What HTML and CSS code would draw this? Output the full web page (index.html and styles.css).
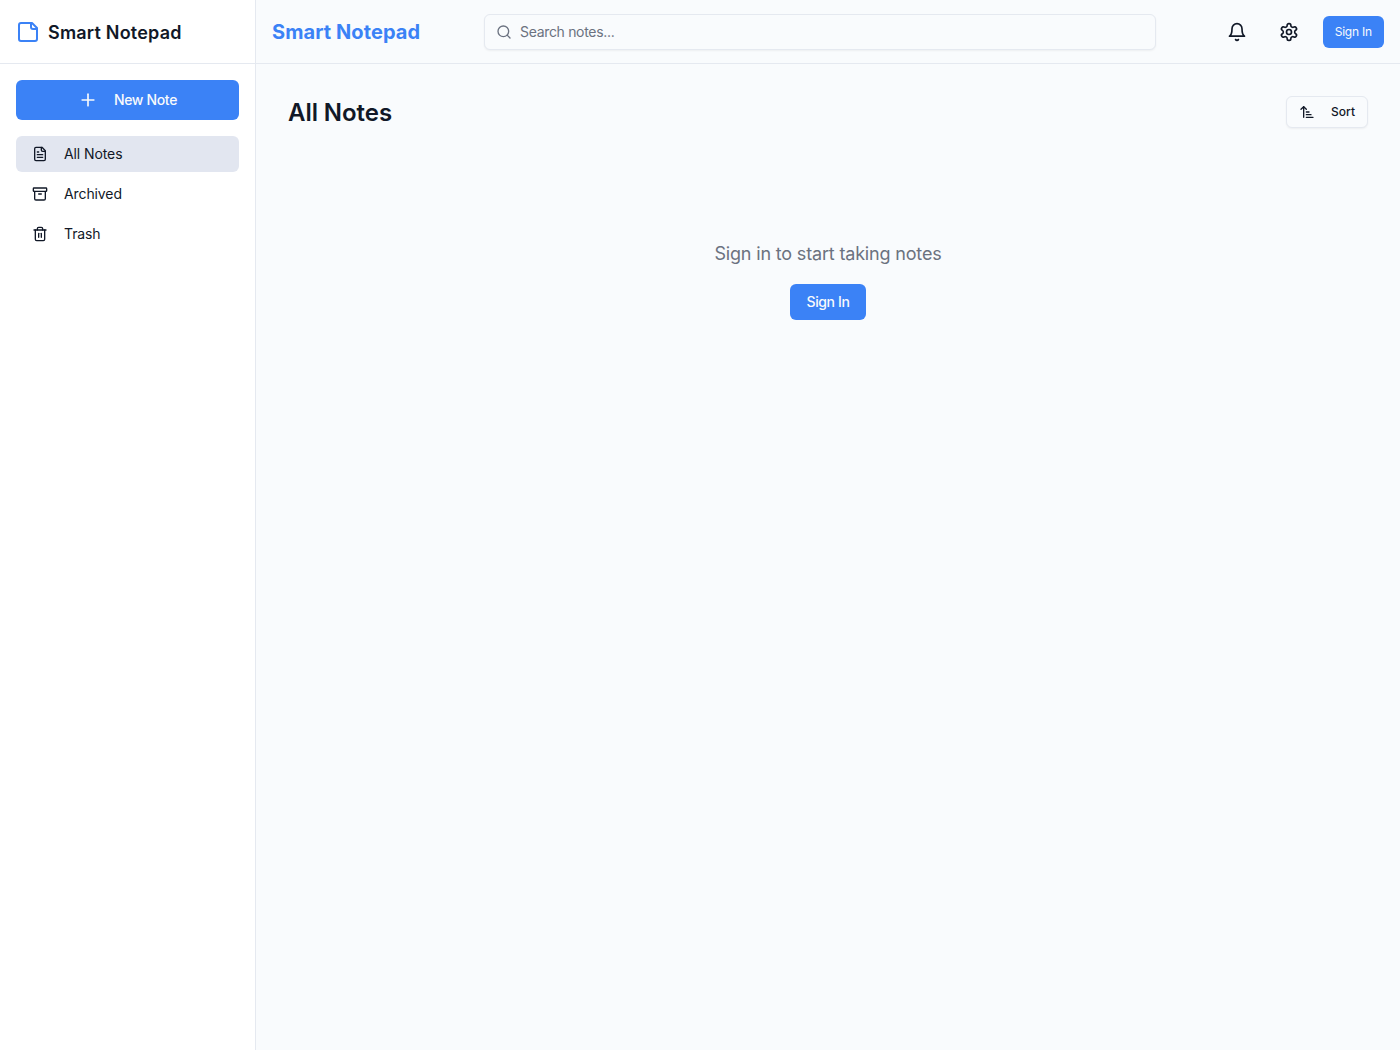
FILE: index.html
```html
<!DOCTYPE html>
<html lang="en">
<head>
<meta charset="utf-8">
<title>Smart Notepad</title>
<link rel="stylesheet" href="styles.css">
</head>
<body>
<div class="app">
  <aside class="sidebar">
    <div class="brand">
      <svg class="icon icon-24 icon-blue" viewBox="0 0 24 24"><path d="M16 3H5a2 2 0 0 0-2 2v14a2 2 0 0 0 2 2h14a2 2 0 0 0 2-2V8Z"/><path d="M15 3v4a2 2 0 0 0 2 2h4"/></svg>
      <span class="brand-name">Smart Notepad</span>
    </div>
    <div class="side-body">
      <button class="btn new-note">
        <svg class="icon icon-20" viewBox="0 0 24 24"><path d="M5 12h14"/><path d="M12 5v14"/></svg>
        <span class="label">New Note</span>
      </button>
      <nav class="nav">
        <a class="nav-item active">
          <svg class="icon icon-16" viewBox="0 0 24 24"><path d="M15 2H6a2 2 0 0 0-2 2v16a2 2 0 0 0 2 2h12a2 2 0 0 0 2-2V7Z"/><path d="M14 2v4a2 2 0 0 0 2 2h4"/><path d="M10 9H8"/><path d="M16 13H8"/><path d="M16 17H8"/></svg>
          <span class="label">All Notes</span>
        </a>
        <a class="nav-item">
          <svg class="icon icon-16" viewBox="0 0 24 24"><rect width="20" height="5" x="2" y="3" rx="1"/><path d="M4 8v11a2 2 0 0 0 2 2h12a2 2 0 0 0 2-2V8"/><path d="M10 12h4"/></svg>
          <span class="label">Archived</span>
        </a>
        <a class="nav-item">
          <svg class="icon icon-16" viewBox="0 0 24 24"><path d="M3 6h18"/><path d="M19 6v14c0 1-1 2-2 2H7c-1 0-2-1-2-2V6"/><path d="M8 6V4c0-1 1-2 2-2h4c1 0 2 1 2 2v2"/><path d="M10 11v6"/><path d="M14 11v6"/></svg>
          <span class="label">Trash</span>
        </a>
      </nav>
    </div>
  </aside>
  <div class="content">
    <header class="topbar">
      <div class="top-title">Smart Notepad</div>
      <label class="search">
        <svg class="icon icon-16 icon-muted" viewBox="0 0 24 24"><circle cx="11" cy="11" r="8"/><path d="m21 21-4.3-4.3"/></svg>
        <input class="search-input" type="text" placeholder="Search notes...">
      </label>
      <div class="top-actions">
        <button class="icon-btn"><svg class="icon icon-20" viewBox="0 0 24 24"><path d="M6 8a6 6 0 0 1 12 0c0 7 3 9 3 9H3s3-2 3-9"/><path d="M10.3 21a1.94 1.94 0 0 0 3.4 0"/></svg></button>
        <button class="icon-btn"><svg class="icon icon-20" viewBox="0 0 24 24"><path d="M12.22 2h-.44a2 2 0 0 0-2 2v.18a2 2 0 0 1-1 1.73l-.43.25a2 2 0 0 1-2 0l-.15-.08a2 2 0 0 0-2.73.73l-.22.38a2 2 0 0 0 .73 2.73l.15.1a2 2 0 0 1 1 1.72v.51a2 2 0 0 1-1 1.74l-.15.09a2 2 0 0 0-.73 2.73l.22.38a2 2 0 0 0 2.73.73l.15-.08a2 2 0 0 1 2 0l.43.25a2 2 0 0 1 1 1.73V20a2 2 0 0 0 2 2h.44a2 2 0 0 0 2-2v-.18a2 2 0 0 1 1-1.73l.43-.25a2 2 0 0 1 2 0l.15.08a2 2 0 0 0 2.73-.73l.22-.39a2 2 0 0 0-.73-2.73l-.15-.08a2 2 0 0 1-1-1.74v-.5a2 2 0 0 1 1-1.74l.15-.09a2 2 0 0 0 .73-2.73l-.22-.38a2 2 0 0 0-2.73-.73l-.15.08a2 2 0 0 1-2 0l-.43-.25a2 2 0 0 1-1-1.73V4a2 2 0 0 0-2-2z"/><circle cx="12" cy="12" r="3"/></svg></button>
        <button class="btn btn-small">Sign In</button>
      </div>
    </header>
    <main class="main">
      <div class="main-head">
        <h1 class="page-title">All Notes</h1>
        <button class="sort-btn">
          <svg class="icon icon-16" viewBox="0 0 24 24"><path d="m3 8 4-4 4 4"/><path d="M7 4v16"/><path d="M11 12h4"/><path d="M11 16h7"/><path d="M11 20h10"/></svg>
          <span class="label">Sort</span>
        </button>
      </div>
      <div class="empty">
        <p class="empty-text">Sign in to start taking notes</p>
        <button class="btn btn-medium"><span class="label">Sign In</span></button>
      </div>
    </main>
  </div>
</div>
</body>
</html>
```

FILE: styles.css
```css
* { box-sizing: border-box; }
html, body { margin: 0; height: 100%; }
body {
  font-family: Inter, "Noto Sans", "Liberation Sans", sans-serif;
  color: #111827;
  background: #f9fbfd;
  overflow: hidden;
}
button, input { font: inherit; }
.app { display: flex; height: 1050px; }
.label { padding-bottom: 1px; }
.icon {
  fill: none;
  stroke: currentColor;
  stroke-width: 2;
  stroke-linecap: round;
  stroke-linejoin: round;
  flex: none;
  display: block;
}
.icon-16 { width: 16px; height: 16px; }
.icon-20 { width: 20px; height: 20px; }
.icon-24 { width: 24px; height: 24px; }
.icon-blue { color: #3b82f6; }
.icon-muted { color: #6b7280; }

.sidebar {
  width: 256px;
  flex: none;
  background: #fff;
  border-right: 1px solid #e5e9f0;
}
.brand {
  height: 64px;
  display: flex;
  align-items: center;
  gap: 8px;
  padding: 0 16px;
  border-bottom: 1px solid #e5e9f0;
}
.brand-name { font-size: 18px; font-weight: 600; letter-spacing: 0.2px; padding-top: 2px; }
.side-body { padding: 16px; display: flex; flex-direction: column; gap: 16px; }
.btn {
  border: 0;
  background: #3b82f6;
  color: #f8fafc;
  border-radius: 6px;
  font-weight: 500;
  display: inline-flex;
  align-items: center;
  justify-content: center;
}
.new-note { height: 40px; width: 100%; gap: 16px; font-size: 14px; letter-spacing: -0.35px; }
.nav { display: flex; flex-direction: column; gap: 4px; }
.nav-item {
  height: 36px;
  display: flex;
  align-items: center;
  gap: 16px;
  padding: 0 16px;
  border-radius: 6px;
  font-size: 14px;
  font-weight: 400;
  letter-spacing: -0.1px;
}
.nav-item.active { background: #e2e6f0; }

.content { flex: 1; min-width: 0; display: flex; flex-direction: column; }
.topbar {
  height: 64px;
  flex: none;
  display: flex;
  align-items: center;
  padding: 0 16px;
  border-bottom: 1px solid #e5e9f0;
}
.top-title { width: 212px; flex: none; font-size: 20px; font-weight: 700; color: #3b82f6; letter-spacing: 0.08px; }
.search {
  width: 672px;
  height: 36px;
  flex: none;
  display: flex;
  align-items: center;
  gap: 8px;
  padding: 0 12px 0 11px;
  background: #f9fbfd;
  border: 1px solid #e5e9f0;
  border-radius: 6px;
  box-shadow: 0 1px 2px rgba(0, 0, 0, 0.05);
}
.search-input {
  flex: 1;
  min-width: 0;
  border: 0;
  padding: 0;
  outline: 0;
  background: transparent;
  font-size: 14px;
  letter-spacing: -0.32px;
  color: #111827;
}
.search-input::placeholder { color: #6b7280; opacity: 1; }
.top-actions { margin-left: auto; display: flex; align-items: center; gap: 12px; }
.icon-btn {
  width: 40px;
  height: 40px;
  border: 0;
  padding: 0;
  background: transparent;
  color: #111827;
  display: flex;
  align-items: center;
  justify-content: center;
}
.btn-small { height: 32px; padding: 0 12px; font-size: 12px; margin-left: 2px; font-weight: 400; letter-spacing: -0.2px; }
.btn-medium { height: 36px; padding: 0 17px; font-size: 14px; letter-spacing: -0.4px; }

.main { flex: 1; padding: 32px; }
.main-head { display: flex; align-items: center; justify-content: space-between; }
.page-title { margin: 0; padding-top: 2px; font-size: 24px; font-weight: 600; line-height: 30px; letter-spacing: -0.05px; }
.sort-btn {
  height: 32px;
  display: flex;
  align-items: center;
  gap: 16px;
  padding: 0 12px;
  background: #f9fbfd;
  color: #111827;
  border: 1px solid #e5e9f0;
  border-radius: 6px;
  font-size: 12px;
  font-weight: 500;
  box-shadow: 0 1px 2px rgba(0, 0, 0, 0.05);
}
.empty {
  margin-top: 112px;
  display: flex;
  flex-direction: column;
  align-items: center;
}
.empty-text { margin: 0 0 16px; font-size: 18px; line-height: 28px; color: #6b7280; letter-spacing: -0.17px; }
```
